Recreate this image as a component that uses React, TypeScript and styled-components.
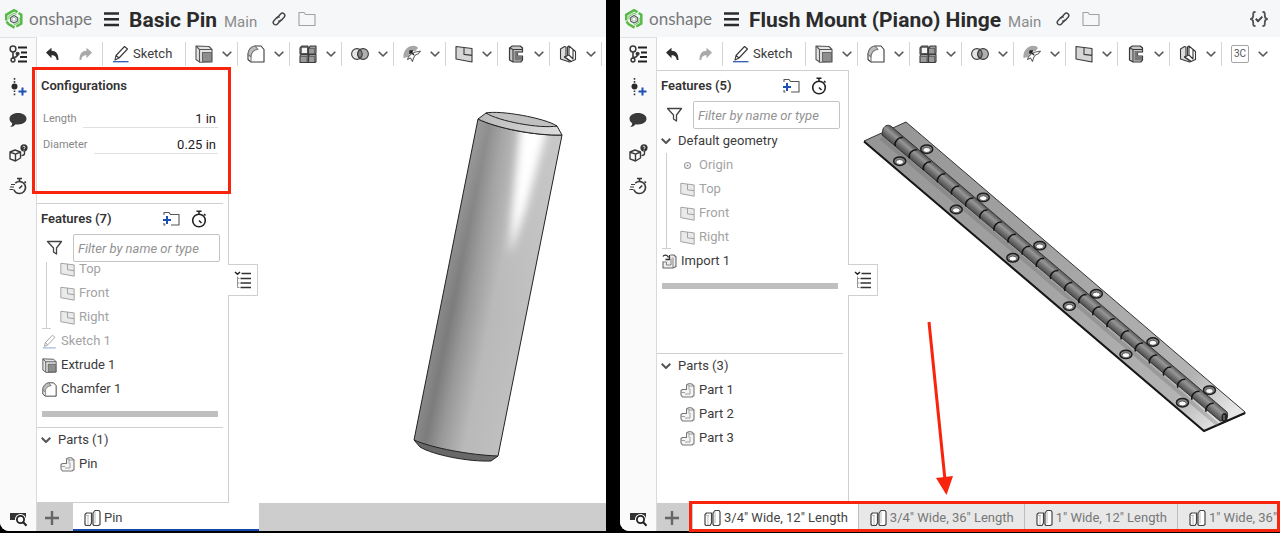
import React from "react";
import styled, { createGlobalStyle, css } from "styled-components";

const GlobalStyle = createGlobalStyle`
  *, *::before, *::after { box-sizing: border-box; }
  body { margin: 0; background: #000; color: #333; font: 13px/16px Roboto, "Liberation Sans", sans-serif; }
  button, input { font: inherit; color: inherit; }
  ul { list-style: none; margin: 0; padding: 0; }
  h1, h2 { margin: 0; }
`;

const ANNOTATION = "#f9240c";

/* ---------- layout ---------- */

const Page = styled.div`
  display: grid;
  grid-template-columns: minmax(0, 606fr) minmax(0, 660fr);
  gap: 14px;
  min-height: 100vh;
  padding-bottom: 2px;
  overflow: hidden;
`;

const Window = styled.section`
  display: flex;
  flex-direction: column;
  min-width: 0;
  background: #fff;
  border-bottom-left-radius: 9px;
`;

const Header = styled.header`
  display: flex;
  align-items: center;
  height: 37px;
  padding: 0 12px 0 4px;
  background: #f6f7f9;
  white-space: nowrap;
`;

const Brand = styled.a`
  display: flex;
  align-items: center;
  gap: 4px;
  width: 100px;
  color: #77787b;
  font: 17px/22px Lato, sans-serif;
  text-decoration: none;
  svg { flex: none; }
`;

const IconButton = styled.button`
  display: inline-flex;
  align-items: center;
  justify-content: center;
  flex: none;
  padding: 0;
  border: 0;
  background: none;
`;

const Title = styled.h1`
  margin: 2px 7px 0 10px;
  color: #2b2b2b;
  font-size: 21px;
  line-height: 24px;
  font-weight: 700;
`;

const Branch = styled.span`
  margin: 6px 14px 0 0;
  color: #8b8b8b;
  font-size: 15px;
  line-height: 20px;
`;

const HeaderActions = styled.div`
  display: flex;
  gap: 11px;
`;

const HeaderEnd = styled.div`
  margin-left: auto;
  display: flex;
`;

const Body = styled.div`
  display: flex;
  flex: 1;
  min-height: 0;
`;

const Rail = styled.nav`
  display: flex;
  flex-direction: column;
  align-items: center;
  flex: none;
  width: 37px;
  padding-bottom: 3px;
  background: #fafafa;
  border-right: 1px solid #d9d9d9;
  border-top: 1px solid #e1e1e1;
  border-bottom-left-radius: 9px;

  ${IconButton} { width: 36px; height: 33px; }
  ${IconButton}:first-child { height: 32px; }
  ${IconButton}:last-child { height: 18px; margin-top: auto; }
`;

const Main = styled.div`
  display: flex;
  flex-direction: column;
  flex: 1;
  min-width: 0;
`;

const Toolbar = styled.div`
  display: flex;
  align-items: center;
  flex: none;
  height: 33px;
  overflow: hidden;
`;

const ToolGroup = styled.div<{ $first?: boolean; $wide?: boolean; $last?: boolean }>`
  display: flex;
  align-items: center;
  flex: none;
  height: 24px;
  width: ${(p) => (p.$wide ? 83 : p.$first ? 66 : 52)}px;
  padding-left: 9px;
  gap: ${(p) => (p.$first ? 18 : 9)}px;
  border-right: 1px solid ${(p) => (p.$last ? "transparent" : "#d4d4d4")};
`;

const LabelButton = styled(IconButton)`
  gap: 3px;
  color: #3c3c3c;
  font-size: 13px;
`;

const CodeBox = styled.span`
  width: 18px;
  height: 18px;
  border: 1px solid #a5a5a5;
  border-radius: 2px;
  color: #555;
  font-size: 10px;
  line-height: 16px;
`;

const Workspace = styled.div`
  display: flex;
  flex: 1;
  min-height: 433px;
`;

const Panel = styled.aside<{ $ruled?: boolean }>`
  position: relative;
  display: flex;
  flex-direction: column;
  flex: none;
  width: 192px;
  border-right: 1px solid #cfcfcf;
  border-bottom: 1px solid ${(p) => (p.$ruled ? "transparent" : "#cfcfcf")};
  border-top: 1px solid ${(p) => (p.$ruled ? "#cfcfcf" : "transparent")};
`;

const FlyoutButton = styled(IconButton)`
  position: absolute;
  left: 100%;
  top: 193px;
  width: 30px;
  height: 32px;
  background: #fff;
  border: 1px solid #cfcfcf;
  border-left: 0;
`;

const Heading = styled.h2`
  color: #333;
  font-size: 13px;
  line-height: 16px;
  font-weight: 600;
`;

const ConfigSection = styled.section`
  position: relative;
  flex: none;
  height: 132px;
  padding: 7px 10px 0 4px;
`;

const ConfigOutline = styled.div`
  position: absolute;
  inset: -4px -3px 9px -5px;
  z-index: 2;
  border: 3px solid ${ANNOTATION};
  pointer-events: none;
`;

const ConfigField = styled.div`
  display: flex;
  align-items: center;
  gap: 6px;
  margin: 7px 0 0 2px;
  height: 19px;

  label { color: #888; font-size: 11px; }
  input {
    flex: 1;
    min-width: 0;
    height: 19px;
    padding: 0 2px 0 0;
    border: 0;
    border-bottom: 1px solid #e0e0e0;
    background: none;
    text-align: right;
    color: #222;
  }
`;

const ConfigFields = styled.div`
  padding-top: 8px;
`;

const Features = styled.section<{ $divided?: boolean }>`
  display: flex;
  flex-direction: column;
  flex: 1;
  min-height: 0;
  margin-right: 5px;
  padding-left: 4px;
  border-top: ${(p) => (p.$divided ? "1px solid #cfcfcf" : "0")};
`;

const FeaturesHead = styled.div`
  display: flex;
  align-items: center;
  flex: none;
  height: 30px;
  padding-right: 15px;
  gap: 10px;
  ${Heading} { flex: 1; }
`;

const FilterRow = styled.div`
  display: flex;
  align-items: center;
  flex: none;
  gap: 10px;
  padding: 0 3px 0 5px;

  svg { flex: none; }
  input {
    flex: 1;
    min-width: 0;
    height: 28px;
    padding: 0 4px;
    border: 1px solid #c4c4c4;
    border-radius: 2px;
    background: #fff;
  }
  input::placeholder { color: #939393; font-style: italic; opacity: 1; }
`;

const ListClip = styled.div<{ $scrolled?: boolean }>`
  flex: 1;
  min-height: 0;
  overflow: hidden;
  > ul { margin-top: ${(p) => (p.$scrolled ? -5 : 0)}px; }
`;

const Row = styled.li<{ $muted?: boolean; $group?: boolean }>`
  display: flex;
  align-items: center;
  gap: ${(p) => (p.$group ? 7 : 4)}px;
  height: 24px;
  padding-left: ${(p) => (p.$group ? 0 : 1)}px;
  color: ${(p) => (p.$muted ? "#a3a3a3" : "#3b3b3b")};
  svg { flex: none; ${(p) => p.$muted && css`opacity: 0.5;`} }
`;

const Branching = styled.ul`
  position: relative;
  margin-left: 5px;
  padding-left: 12px;
  border-left: 1px solid #cfcfcf;
  &::after {
    content: "";
    position: absolute;
    left: -5px;
    bottom: 0;
    width: 9px;
    border-bottom: 1px solid #cfcfcf;
  }
`;

const RollbackBar = styled.div`
  height: 6px;
  margin: 10px 5px 0 1px;
  background: #bfbfbf;
`;

const Parts = styled.section<{ $tall?: boolean }>`
  flex: none;
  height: ${(p) => (p.$tall ? 149 : 75)}px;
  margin-right: 5px;
  padding-left: 4px;
  border-top: 1px solid #cfcfcf;
  ul { padding-left: 18px; }
`;

const Viewport = styled.div<{ $shifted?: boolean }>`
  position: relative;
  display: flex;
  align-items: center;
  justify-content: center;
  flex: 1;
  min-width: 0;
  padding: ${(p) => (p.$shifted ? "0 20px 22px 0" : "0 0 0 141px")};
  > svg { flex: none; }
`;

const Pointer = styled.svg`
  position: absolute;
  left: 70px;
  bottom: 6px;
`;

const TabBar = styled.div`
  position: relative;
  display: flex;
  flex: none;
  height: 28px;
  background: #cdcdcd;
`;

const AddTab = styled(IconButton)`
  width: 36px;
  padding: 2px 6px 0 0;
`;

const Tab = styled.button<{ $active?: boolean; $underlined?: boolean }>`
  display: flex;
  align-items: center;
  flex: none;
  gap: 3px;
  padding: 2px 10px 0 11px;
  border: 0;
  border-right: 1px solid #bdbdbd;
  background: ${(p) => (p.$active ? "#fff" : "#e8e8e8")};
  color: ${(p) => (p.$active ? "#444" : "#777")};
  white-space: nowrap;
  ${(p) =>
    p.$underlined &&
    css`
      width: 186px;
      border-right: 0;
      border-bottom: 2px solid #1546a8;
      padding-top: 3px;
    `}
`;

const TabStrip = styled.div`
  display: flex;
  flex: 1;
  min-width: 0;
  overflow: hidden;
`;

const TabsOutline = styled.div`
  position: absolute;
  inset: -2px 0 -1px 32px;
  border: 3px solid ${ANNOTATION};
  pointer-events: none;
`;

/* ---------- icons ---------- */

type IconProps = { w?: number; h?: number; box?: string; children: React.ReactNode };
const Icon = ({ w = 18, h = 18, box, children }: IconProps) => (
  <svg width={w} height={h} viewBox={box ?? `0 0 ${w} ${h}`} fill="none" stroke="#3a3a3a" strokeWidth="1.1" strokeLinejoin="round" aria-hidden="true">
    {children}
  </svg>
);

const LogoIcon = () => (
  <Icon w={21} h={22}>
    <path d="M2.200 12.500V6.800L10 2.200l3.500 2M14.500 5l2.800 1.700v8.800l-5 3M10.500 19.600 4.500 16l-2-2.500" stroke="#58b947" strokeWidth="2.500" strokeLinejoin="miter" />
    <path d="M5 11.500V8.300L10 5.300l2.500 1.400M15 9.500v4.800L10 17" stroke="#7cc96e" strokeWidth="1.200" />
    <path d="m10 7.500 3.300 1.900v3.800L10 15l-3.300-1.800V9.400Z" fill="#fff" stroke="#4d6257" strokeWidth="1.200" />
    <circle cx="10" cy="11.200" r="1.900" stroke="#a5a5a5" strokeWidth=".8" />
  </Icon>
);
const MenuIcon = () => (
  <Icon w={15} h={16}><path d="M0 2.500h15M0 8.200h15M0 14h15" stroke="#2b2b2b" strokeWidth="2.600" /></Icon>
);
const LinkIcon = () => (
  <Icon w={16} h={16}>
    <g transform="rotate(-48 8 8)" stroke="#444" strokeWidth="1.400">
      <path d="M9.300 10.200H3.200a2.400 2.400 0 0 1 0-4.800h4.200a2.400 2.400 0 0 1 2.300 2" />
      <path d="M6.800 5.800h6a2.400 2.400 0 0 1 0 4.800H8.600a2.400 2.400 0 0 1-2.300-2" />
    </g>
  </Icon>
);
const FolderIcon = () => (
  <Icon w={18} h={16}><path d="M1 14.500V1.500h5l1.600 2H17v11Z" stroke="#a0a0a0" /></Icon>
);
const BracesIcon = () => (
  <Icon w={18} h={18}>
    <path d="M5.500 2H4.800C3 2 3.200 3.500 3.200 5.500S3 8.600.8 9c2.200.4 2.400 1.500 2.400 3.500S3 16 4.800 16h.7M12.500 2h.7C15 2 14.800 3.500 14.800 5.500S15 8.600 17.200 9c-2.200.4-2.400 1.500-2.400 3.500S15 16 13.200 16h-.7" strokeWidth="1.800" stroke="#555" />
    <path d="m5.800 8.800 2.300 2.400 4.200-4.600" stroke="#444" strokeWidth="2" />
  </Icon>
);
const TreeIcon = () => (
  <Icon w={19} h={18}>
    <circle cx="4" cy="4" r="2.900" strokeWidth="1.500" />
    <path d="M4 7v7M4 12.500c3 0 4.500-1 4.500-3.500" strokeWidth="1.600" />
    <circle cx="4" cy="15" r="1.900" strokeWidth="1.500" />
    <circle cx="8.600" cy="8.800" r="1.500" fill="#333" />
    <path d="M9 2.500h9M12 7.500h6M11 12h7M9 16.500h9" stroke="#222" strokeWidth="1.900" />
  </Icon>
);
const ConfigIcon = () => (
  <Icon>
    <path d="M5.500 0v18" strokeWidth="1.600" strokeDasharray="1.700 1.400" />
    <circle cx="5.500" cy="8.500" r="3" fill="#2c2c2c" stroke="none" />
    <path d="M9.500 13.500h8M13.500 9.500v8" stroke="#1b50b5" strokeWidth="2" />
  </Icon>
);
const CommentIcon = () => (
  <Icon><path d="M9 2c5 0 8.500 2.500 8.500 5.800S14 13.500 9 13.500c-1 0-1.500 0-2.300-.2C5 15.500 3 16 1 16c1.500-1 2-2 2.200-3.800C1.500 11 .5 9.600.5 7.800.5 4.500 4 2 9 2Z" fill="#3a3a3a" stroke="none" /></Icon>
);
const CubeHelpIcon = () => (
  <Icon w={19}>
    <path d="m1 8 5-2 5.500 2v6l-5 3L1 14.800ZM1 8l5.500 2.200L11.500 8M6.500 10.200V17" strokeWidth="1.400" />
    <circle cx="15" cy="3.800" r="3.600" fill="#333" stroke="none" />
    <path d="M13.800 3.200c.2-1.400 2.400-1.200 2.200.1-.1.700-1 .8-1 1.700M15 5.700v.8" stroke="#fff" strokeWidth=".9" />
    <path d="M15.500 7v2.500c0 1.500-1 2-3 2" strokeWidth="1.400" />
  </Icon>
);
const SpeedIcon = () => (
  <Icon>
    <circle cx="10.500" cy="10.500" r="6" strokeWidth="1.700" strokeDasharray="31 7" strokeDashoffset="15" />
    <path d="M8 1.500h5M10.500 1.500v3M15.500 4.500l1.400 1.400M10.200 11.500l3-3" strokeWidth="1.700" />
    <path d="M2 7.500h4M1 10h4M.5 12.500h4" strokeWidth="1" />
  </Icon>
);
const FindIcon = () => (
  <Icon w={19} h={16}>
    <path d="M1 2h16v7H1Z" fill="#333" stroke="none" />
    <circle cx="11.500" cy="8.500" r="5" fill="#fafafa" stroke="#fafafa" />
    <circle cx="11.500" cy="8.500" r="3.600" stroke="#222" strokeWidth="1.800" />
    <path d="m14 11 3.500 3.700" stroke="#222" strokeWidth="2" />
  </Icon>
);
const UndoIcon = ({ flipped }: { flipped?: boolean }) => (
  <Icon w={14} h={14}>
    <path transform={flipped ? "matrix(-1 0 0 1 14 0)" : undefined} d="M0 5.500 5.500.8v3c4.500.2 7 2.700 7 9.200h-1.800c-.4-3.400-1.700-4.700-5.200-4.800v3Z" fill={flipped ? "#a9a9a9" : "#2d2d2d"} stroke="none" />
  </Icon>
);
const PencilIcon = ({ size = 18 }: { size?: number }) => (
  <Icon w={size} h={size} box="0 0 18 18">
    <path d="m3 15 1-4.500L12.500 1.500l3 2.500L7 13ZM4 10.500 7 13" />
    <path d="M1 16.700h15.500" stroke="#3158b5" strokeWidth="1.300" />
  </Icon>
);
const ExtrudeIcon = ({ size = 18 }: { size?: number }) => (
  <Icon w={size} h={size} box="0 0 18 18">
    <path d="m1 1 13 .5 3 3V17l-12 .3L1 14.500Z" fill="#e4e4e4" stroke="#555" />
    <path d="M1 1.200 4.500 4.500H17M4.500 4.500v12.700" stroke="#555" />
    <path d="M7.500 7.500h9v9h-9Z" fill="#8e8e8e" stroke="#666" />
  </Icon>
);
const FilletIcon = ({ size = 18 }: { size?: number }) => (
  <Icon w={size} h={size} box="0 0 18 18">
    <path d="M1 14.500V9.500C1 5 4 1.500 8 1h6l3 3.500v12.500H4Z" fill="#fff" />
    <path d="M1 9.500C1 5 4 1.500 8 1l3 3.500c-4 0-7 3-7 7.500Z" fill="#bdbdbd" stroke="#777" />
    <path d="M4 12v5" stroke="#777" />
  </Icon>
);
const PatternIcon = () => (
  <Icon>
    <path d="m1 3 2-2h6v8H1Z" fill="#777" /><path d="M3 3h5v5H3Z" fill="#f4f4f4" stroke="none" />
    <path d="m9.500 3 2-2h5.500v7l-1 1H9.500ZM1 11l1-1.500h7v8H1ZM9.500 11l1-1.500H17v7l-1 1H9.500Z" fill="#9a9a9a" />
    <path d="M10 3.500h5.500V9M1.500 11.500h6.500V17M10 11.500h5.500V17" stroke="#666" />
  </Icon>
);
const BooleanIcon = () => (
  <Icon>
    <circle cx="6" cy="9" r="5.400" fill="#e5e5e5" /><circle cx="12" cy="9" r="5.400" fill="#b0b0b0" />
    <path d="M9 4.600a5.400 5.400 0 0 1 0 8.800 5.400 5.400 0 0 1 0-8.800Z" fill="#858585" />
  </Icon>
);
const SweepIcon = () => (
  <Icon>
    <path d="M.5 13C-.5 6 5 .5 10.500.8c2 0 3.500.8 4.500 2.200L12.500 6l-5 .5L5 12Z" fill="#a7a7a7" stroke="none" />
    <path d="M8 9c3-2 6-3 9.500-2.800L15 9c-2.500 0-4.500 3-5.500 7.500L7.500 13l-3 1.500C5 12 6 10.500 8 9Z" fill="#fff" stroke="#666" />
    <path d="m7 6 4 4M7 9V6h3" stroke="#222" strokeWidth="1.400" />
  </Icon>
);
const PlaneIcon = ({ size = 18 }: { size?: number }) => (
  <Icon w={size} h={size} box="0 0 18 18">
    <path d="m1 1.500 16 2v13.500L1 14Z" fill="#d6d6d6" /><path d="M9 2.600v6.800l8 1" />
  </Icon>
);
const FrameIcon = () => (
  <Icon>
    <path d="m2.500 3 2.800-2h8l2.200 2v4h-5v4h5v4l-1.800 2H6l-3.500-2Z" fill="#c7c7c7" strokeWidth="1.200" />
    <path d="M2.500 3 6 4.500h9M6 4.500V17" /><path d="M7.500 6h7.500v1.500H10.500v3.800H15V15.500H7.500Z" fill="#777" stroke="none" />
  </Icon>
);
const SheetIcon = () => (
  <Icon>
    <path d="m1.500 4 4-2.500 1.500.5v9l-1.500 1L12 16.500 10.500 17 1.500 14Z" fill="#ddd" />
    <path d="M10 10V1l6.500 5.500v8L12 16.500 5.500 12 10 10l4 4V5" fill="none" />
    <path d="M10 1 8.500 2v8.600" />
  </Icon>
);
const Chevron = ({ heavy }: { heavy?: boolean }) => (
  <Icon w={10} h={8}><path d="m.7 1.700 4.300 4.300 4.300-4.300" stroke="#555" strokeWidth={heavy ? 2 : 1.600} /></Icon>
);
const AddFolderIcon = () => (
  <Icon><path d="M2 5V2.500h5l1.500 2H17V15H9M2 13v2h1.500" stroke="#555" /><path d="M1 10h8M5 6v8" stroke="#1b50b5" strokeWidth="2" /></Icon>
);
const StopwatchIcon = () => (
  <Icon><circle cx="9" cy="10.500" r="6.300" strokeWidth="1.600" stroke="#222" /><path d="M6.500 1.200h5M9 1.200V4M14 4l1.500 1.500M9 10.500l2.500 2.500" stroke="#222" strokeWidth="1.500" /></Icon>
);
const FunnelIcon = () => (
  <Icon w={17} h={16}><path d="M1.500 1.500h14l-5 6.500v6l-3-2V8Z" stroke="#444" strokeWidth="1.300" /></Icon>
);
const OriginIcon = () => (
  <Icon w={15} h={15}><circle cx="7.500" cy="7.500" r="3" /><circle cx="7.500" cy="7.500" r="1" fill="#333" stroke="none" /></Icon>
);
const ImportIcon = () => (
  <Icon w={15} h={15}>
    <path d="M1 7.500V14h10l3-1.500V3L12 1H8.500" fill="#eee" stroke="#666" />
    <path d="M1 2.500C2 .5 5 .5 6.500 3.500M7.500 1v4.500H3.500" stroke="#333" strokeWidth="1.300" />
    <path d="M1 8h3.500v3H9V4.500M11 3.500V14" stroke="#777" strokeWidth=".9" />
  </Icon>
);
const PartIcon = () => (
  <Icon w={15} h={15}>
    <path d="M1 7.500 2.500 6.500H6.500V2L8.500.8h3L14 3V12.500L12 14H2.500L1 12Z" fill="#f4f4f4" stroke="#777" />
    <path d="M6.500 2h2.500v4.500M9 3l5 .2M1 9.500h4M5 11h5V6" stroke="#999" strokeWidth=".9" />
  </Icon>
);
const StudioIcon = () => (
  <Icon w={17} h={18}>
    <path d="M1 5.500 2.500 4h5v10L6 16.500H2L1 15.500ZM9 4l2-2.500h4L16 3v12.500l-1.500 1H10L9 15.500Z" fill="#fff" stroke="#444" strokeWidth="1.200" />
    <path d="M1.500 6.500H5M4 7v9M11 2.500v12" stroke="#aaa" strokeWidth=".8" />
  </Icon>
);
const PlusIcon = () => (
  <Icon w={14} h={14}><path d="M0 7h14M7 0v14" stroke="#666" strokeWidth="2.400" /></Icon>
);
const ListIcon = () => (
  <Icon w={18} h={18}>
    <path d="M7.500 2.500H17M6.500 7.500H17M6.500 12H17M6.500 16.500H17" stroke="#333" strokeWidth="1.300" />
    <path d="m1 1 2.500 2.300L6 1" stroke="#222" strokeWidth="1.500" /><path d="M3.500 5.500v11M3.500 7.500h2M3.500 12h2M3.500 16.500h2" stroke="#888" strokeWidth=".9" />
  </Icon>
);

/* ---------- models ---------- */

const PIN_BODY = "M478 119c18 9 58 17 84 16l-64 321c-28-1-66-8-84-16Z";

const PinModel = () => (
  <svg width="152" height="354" viewBox="412 110 152 354" role="img" aria-label="Pin model">
    <defs>
      <linearGradient id="pinBody" gradientUnits="userSpaceOnUse" x1="446" y1="279" x2="530" y2="296">
        <stop offset="0" stopColor="#8a8a8a" /><stop offset=".14" stopColor="#7c7c7c" /><stop offset=".32" stopColor="#999" />
        <stop offset=".6" stopColor="#b9b9b9" /><stop offset="1" stopColor="#bfbfbf" />
      </linearGradient>
      <linearGradient id="pinLight" gradientUnits="userSpaceOnUse" x1="500" y1="120" x2="460" y2="310">
        <stop offset="0" stopColor="#fff" stopOpacity=".15" /><stop offset="1" stopColor="#fff" stopOpacity="0" />
      </linearGradient>
      <linearGradient id="pinTop" x1="0" x2="1"><stop stopColor="#bababa" /><stop offset="1" stopColor="#dedede" /></linearGradient>
      <filter id="glow" x="-100%" y="-20%" width="300%" height="140%"><feGaussianBlur stdDeviation="4" /></filter>
      <clipPath id="pinClip"><path d={PIN_BODY} /></clipPath>
    </defs>
    <path d="m414 440 6 7c13 8 49 15 71 14l7-5Z" fill="#686868" stroke="#222" />
    <path d={PIN_BODY} fill="url(#pinBody)" />
    <g clipPath="url(#pinClip)">
      <path d={PIN_BODY} fill="url(#pinLight)" />
      <path d="M521 118 549 122 526 208 510 255 512 215Z" fill="#fff" filter="url(#glow)" />
    </g>
    <path d={PIN_BODY} fill="none" stroke="#222" />
    <path d="m478 119 8-6 71 13 5 9c-26 1-66-7-84-16Z" fill="url(#pinTop)" stroke="#222" />
    <path d="M486 113c14-3 59 5 71 13-17 3-59-5-71-13Z" fill="#c0c0c0" stroke="#222" />
  </svg>
);

const KNUCKLES = Array.from({ length: 23 }, (_, i) => ({ x: 898.3 + i * 14.13, y: 140.6 + i * 12.08 }));
const HOLES = Array.from({ length: 6 }, (_, i) => [
  { x: 926.7 + i * 56.55, y: 149.2 + i * 48.2 },
  { x: 899.7 + i * 56.55, y: 161.2 + i * 48.3 },
]).flat();

const HingeModel = () => (
  <svg width="386" height="316" viewBox="862 118 386 316" role="img" aria-label="Piano hinge model">
    <defs>
      <linearGradient id="leaf" gradientUnits="userSpaceOnUse" x1="885" y1="131" x2="1225" y2="421">
        <stop offset="0" stopColor="#969696" /><stop offset=".45" stopColor="#a3a3a3" /><stop offset=".88" stopColor="#b3b3b3" /><stop offset="1" stopColor="#e6e6e6" />
      </linearGradient>
      <linearGradient id="barrel" gradientUnits="userSpaceOnUse" x1="1051.1" y1="278.5" x2="1058.900" y2="269.3">
        <stop offset="0" stopColor="#484848" /><stop offset=".3" stopColor="#6b6b6b" /><stop offset=".65" stopColor="#969696" /><stop offset="1" stopColor="#5c5c5c" />
      </linearGradient>
    </defs>
    <path d="m864 141 42-19 339 290v1.500L1204 431Z" fill="url(#leaf)" stroke="#333" />
    <path d="m864 141.500 340 289.500 41-18" fill="none" stroke="#171717" strokeWidth="2" />
    <path d="m881 138 337 287" stroke="#666" strokeWidth="4" opacity=".3" />
    <path d="m882 135 1-6c2-4 6-5 9-2l335 285c2 5-1 9-7 9Z" fill="url(#barrel)" stroke="#333" />
    {KNUCKLES.map(({ x, y }) => (
      <path key={x} d={`M${x - 3} ${y + 5.5}c-1.500-4 2.500-9 7.500-8.500`} fill="none" stroke="#151515" strokeWidth="1.500" />
    ))}
    <ellipse cx="1224.500" cy="417.500" rx="3" ry="4.500" fill="#222" /><path d="M1224 415v5" stroke="#999" />
    {HOLES.map(({ x, y }) => (
      <g key={x}>
        <ellipse cx={x} cy={y} rx="6" ry="4.200" fill="#858585" stroke="#1d1d1d" strokeWidth="1.500" />
        <ellipse cx={x} cy={y + 0.8} rx="3.800" ry="2.500" fill="#fafafa" stroke="#444" strokeWidth=".8" />
      </g>
    ))}
  </svg>
);

/* ---------- application ---------- */

const TOOLS = [
  { name: "Extrude", icon: <ExtrudeIcon /> },
  { name: "Fillet", icon: <FilletIcon /> },
  { name: "Pattern", icon: <PatternIcon /> },
  { name: "Boolean", icon: <BooleanIcon /> },
  { name: "Move face", icon: <SweepIcon /> },
  { name: "Plane", icon: <PlaneIcon /> },
  { name: "Frame", icon: <FrameIcon /> },
  { name: "Sheet metal", icon: <SheetIcon /> },
];

const RAIL = [
  { name: "Feature tree", icon: <TreeIcon /> },
  { name: "Configurations", icon: <ConfigIcon /> },
  { name: "Comments", icon: <CommentIcon /> },
  { name: "Help", icon: <CubeHelpIcon /> },
  { name: "Performance", icon: <SpeedIcon /> },
  { name: "Search tabs", icon: <FindIcon /> },
];

type StudioProps = { title: string; custom?: boolean; tabs: React.ReactNode; children: React.ReactNode };

const Studio = ({ title, custom, tabs, children }: StudioProps) => (
  <Window>
    <Header>
      <Brand href="#"><LogoIcon />onshape</Brand>
      <IconButton aria-label="Menu"><MenuIcon /></IconButton>
      <Title>{title}</Title>
      <Branch>Main</Branch>
      <HeaderActions>
        <IconButton aria-label="Copy link"><LinkIcon /></IconButton>
        <IconButton aria-label="Folder"><FolderIcon /></IconButton>
      </HeaderActions>
      {custom && <HeaderEnd><IconButton aria-label="Variables"><BracesIcon /></IconButton></HeaderEnd>}
    </Header>
    <Body>
      <Rail>
        {RAIL.map((r) => <IconButton key={r.name} aria-label={r.name}>{r.icon}</IconButton>)}
      </Rail>
      <Main>
        <Toolbar>
          <ToolGroup $first>
            <IconButton aria-label="Undo"><UndoIcon /></IconButton>
            <IconButton aria-label="Redo"><UndoIcon flipped /></IconButton>
          </ToolGroup>
          <ToolGroup $wide><LabelButton><PencilIcon />Sketch</LabelButton></ToolGroup>
          {TOOLS.map((t) => (
            <ToolGroup key={t.name}>
              <IconButton aria-label={t.name}>{t.icon}</IconButton>
              <IconButton aria-label={`${t.name} options`}><Chevron /></IconButton>
            </ToolGroup>
          ))}
          {custom && (
            <ToolGroup $last>
              <IconButton aria-label="Custom features"><CodeBox>3C</CodeBox></IconButton>
              <IconButton aria-label="Custom feature options"><Chevron /></IconButton>
            </ToolGroup>
          )}
        </Toolbar>
        <Workspace>{children}</Workspace>
        <TabBar><AddTab aria-label="Add tab"><PlusIcon /></AddTab>{tabs}</TabBar>
      </Main>
    </Body>
  </Window>
);

const FeatureFilter = ({ count }: { count: number }) => (
  <>
    <FeaturesHead>
      <Heading>Features ({count})</Heading>
      <IconButton aria-label="Add folder"><AddFolderIcon /></IconButton>
      <IconButton aria-label="Regeneration times"><StopwatchIcon /></IconButton>
    </FeaturesHead>
    <FilterRow>
      <FunnelIcon />
      <input aria-label="Filter features" placeholder="Filter by name or type" />
    </FilterRow>
  </>
);

const Planes = () => (
  <>{["Top", "Front", "Right"].map((n) => <Row key={n} $muted><PlaneIcon size={15} />{n}</Row>)}</>
);

const PartList = ({ parts, tall }: { parts: string[]; tall?: boolean }) => (
  <Parts $tall={tall}>
    <Row as="div" $group><Chevron heavy />Parts ({parts.length})</Row>
    <ul>{parts.map((p) => <Row key={p}><PartIcon />{p}</Row>)}</ul>
  </Parts>
);

export default function App() {
  return (
    <>
      <GlobalStyle />
      <Page>
        <Studio title="Basic Pin" tabs={<Tab $active $underlined><StudioIcon />Pin</Tab>}>
          <Panel>
            <ConfigSection>
              <Heading>Configurations</Heading>
              <ConfigFields>
                <ConfigField><label htmlFor="length">Length</label><input id="length" defaultValue="1 in" /></ConfigField>
                <ConfigField><label htmlFor="diameter">Diameter</label><input id="diameter" defaultValue="0.25 in" /></ConfigField>
              </ConfigFields>
              <ConfigOutline />
            </ConfigSection>
            <Features $divided>
              <FeatureFilter count={7} />
              <ListClip $scrolled>
                <ul>
                  <li><Branching><Planes /></Branching></li>
                  <Row $muted><PencilIcon size={15} />Sketch 1</Row>
                  <Row><ExtrudeIcon size={15} />Extrude 1</Row>
                  <Row><FilletIcon size={15} />Chamfer 1</Row>
                </ul>
                <RollbackBar />
              </ListClip>
            </Features>
            <PartList parts={["Pin"]} />
            <FlyoutButton aria-label="Show list"><ListIcon /></FlyoutButton>
          </Panel>
          <Viewport><PinModel /></Viewport>
        </Studio>

        <Studio
          title="Flush Mount (Piano) Hinge"
          custom
          tabs={
            <>
              <TabStrip>
                <Tab $active><StudioIcon />3/4" Wide, 12" Length</Tab>
                <Tab><StudioIcon />3/4" Wide, 36" Length</Tab>
                <Tab><StudioIcon />1" Wide, 12" Length</Tab>
                <Tab><StudioIcon />1" Wide, 36" Length</Tab>
              </TabStrip>
              <TabsOutline />
            </>
          }
        >
          <Panel $ruled>
            <Features>
              <FeatureFilter count={5} />
              <ListClip>
                <ul>
                  <Row $group><Chevron heavy />Default geometry</Row>
                  <li>
                    <Branching>
                      <Row $muted><OriginIcon />Origin</Row>
                      <Planes />
                    </Branching>
                  </li>
                  <Row><ImportIcon />Import 1</Row>
                </ul>
                <RollbackBar />
              </ListClip>
            </Features>
            <PartList parts={["Part 1", "Part 2", "Part 3"]} tall />
            <FlyoutButton aria-label="Show list"><ListIcon /></FlyoutButton>
          </Panel>
          <Viewport $shifted>
            <HingeModel />
            <Pointer width="40" height="178" viewBox="0 0 40 178" aria-hidden="true">
              <path d="m10 3 16 158" stroke={ANNOTATION} strokeWidth="3" />
              <path d="m17 159 17-2-6.500 19Z" fill={ANNOTATION} />
            </Pointer>
          </Viewport>
        </Studio>
      </Page>
    </>
  );
}
